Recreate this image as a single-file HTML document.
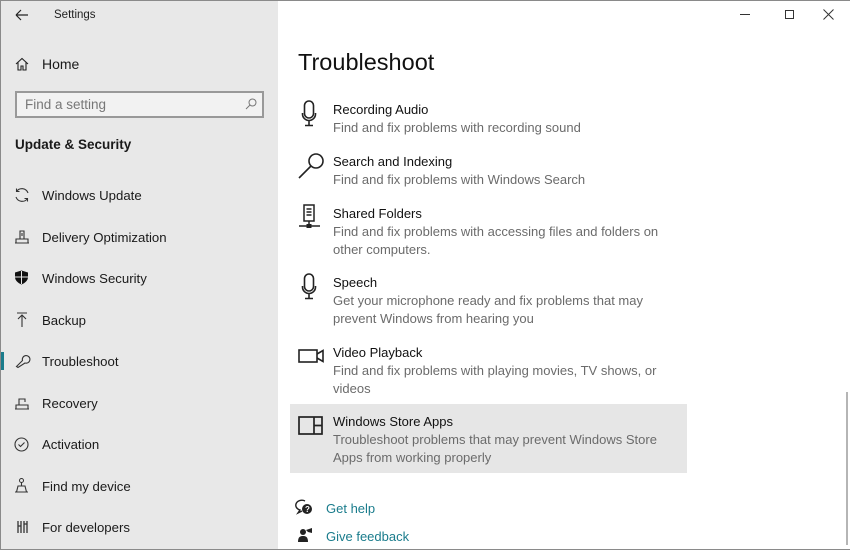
<!DOCTYPE html>
<html><head><style>
*{margin:0;padding:0;box-sizing:border-box}
body{width:850px;height:550px;overflow:hidden;font-family:"Liberation Sans",sans-serif;background:#fff;position:relative}
.win{position:absolute;left:0;top:0;width:850px;height:550px;border:1px solid #8a8a8a;border-right:none}
.side{position:absolute;left:1px;top:1px;width:277px;height:548px;background:#e8e8e8}
.a{position:absolute;white-space:nowrap}
.nav{font-size:13.2px;color:#1a1a1a}
.t{font-size:13px;color:#111}
.d{font-size:13px;color:#6b6b6b;line-height:17.5px}
svg{position:absolute;overflow:visible}
.lk{font-size:13px;color:#1a7c8c}
</style></head><body>
<div class="win"></div>
<div class="side"></div>
<svg style="left:15px;top:8px" width="14" height="14"><path d="M1 7H13M1 7L6 2M1 7L6 12" stroke="#222" fill="none" stroke-width="1.2"/></svg>
<div class="a" style="left:54px;top:9px;font-size:11.5px;color:#222">Settings</div>
<svg style="left:15px;top:57px" width="14" height="14"><path d="M1 7L7 1.5L13 7M3 5.5V13H6V9H8V13H11V5.5" stroke="#222" fill="none" stroke-width="1.1"/></svg>
<div class="a nav" style="left:42px;top:56px;font-size:14px">Home</div>
<div class="a" style="left:15px;top:91px;width:249px;height:27px;border:2px solid #999;background:#f2f2f2"></div>
<div class="a" style="left:25px;top:97px;font-size:13.5px;color:#777">Find a setting</div>
<svg style="left:245px;top:98px" width="12" height="12"><circle cx="7.5" cy="4.5" r="3.5" stroke="#777" fill="none"/><path d="M5 7L1 11" stroke="#777"/></svg>
<div class="a" style="left:15px;top:137px;font-size:13.5px;font-weight:bold;color:#1a1a1a">Update &amp; Security</div>

<svg style="left:14px;top:187px" width="16" height="16"><path d="M14 6A6.5 6.5 0 0 0 2.5 4.5M2 10A6.5 6.5 0 0 0 13.5 11.5M2.5 1.5V4.5H5.5M13.5 14.5V11.5H10.5" stroke="#333" fill="none" stroke-width="1.1"/></svg>
<div class="a nav" style="left:42px;top:188px">Windows Update</div>
<svg style="left:14px;top:229px" width="16" height="15"><path d="M1 14H15M2 14V10H14V14M6 10V2H10V10M8 4V7" stroke="#333" fill="none" stroke-width="1.1"/></svg>
<div class="a nav" style="left:42px;top:230px">Delivery Optimization</div>
<svg style="left:14px;top:270px" width="15" height="15"><path d="M7.5 0.5L14 2.5V7C14 10.5 11 13 7.5 14.5C4 13 1 10.5 1 7V2.5Z" fill="#111"/><path d="M7.5 1V14M1 7H14" stroke="#e8e8e8" stroke-width="1"/></svg>
<div class="a nav" style="left:42px;top:271px">Windows Security</div>
<svg style="left:15px;top:312px" width="14" height="15"><path d="M2 1H12M7 3V15M3 7L7 3L11 7" stroke="#333" fill="none" stroke-width="1.1"/></svg>
<div class="a nav" style="left:42px;top:313px">Backup</div>
<div class="a" style="left:1px;top:352px;width:3px;height:18px;background:#1a7c8c"></div>
<svg style="left:15px;top:353px" width="15" height="15"><path d="M1.5 13.5L7.5 7.5A3.8 3.8 0 1 1 10 10L3 14.5Z" stroke="#333" fill="none" stroke-width="1.1"/></svg>
<div class="a nav" style="left:42px;top:354px">Troubleshoot</div>
<svg style="left:14px;top:395px" width="16" height="15"><path d="M1 14H15M2 14V10H14V14M5 10V4H11V7" stroke="#333" fill="none" stroke-width="1.1"/></svg>
<div class="a nav" style="left:42px;top:396px">Recovery</div>
<svg style="left:14px;top:437px" width="15" height="15"><circle cx="7.5" cy="7.5" r="6.5" stroke="#333" fill="none" stroke-width="1.1"/><path d="M4.5 7.5L6.5 9.5L10.5 5.5" stroke="#333" fill="none" stroke-width="1.1"/></svg>
<div class="a nav" style="left:42px;top:437px">Activation</div>
<svg style="left:14px;top:478px" width="15" height="15"><circle cx="7.5" cy="2.5" r="2" stroke="#333" fill="none"/><path d="M7.5 4.5V8M1 14H14M2.5 14L4 8H11L12.5 14" stroke="#333" fill="none" stroke-width="1.1"/></svg>
<div class="a nav" style="left:42px;top:479px">Find my device</div>
<svg style="left:15px;top:520px" width="14" height="14"><path d="M3 1V13M6 1V13M3 6H6M9 1V13M12 1V13M9 4H12" stroke="#333" fill="none" stroke-width="1.3"/></svg>
<div class="a nav" style="left:42px;top:520px">For developers</div>

<div class="a" style="left:740px;top:14px;width:10px;height:1px;background:#333"></div>
<div class="a" style="left:785px;top:10px;width:9px;height:9px;border:1px solid #333"></div>
<svg style="left:823px;top:9px" width="11" height="11"><path d="M0.5 0.5L10.5 10.5M10.5 0.5L0.5 10.5" stroke="#333"/></svg>

<div class="a" style="left:298px;top:49px;font-size:23.5px;color:#111">Troubleshoot</div>

<svg style="left:302px;top:100px" width="16" height="30"><rect x="2.5" y="1" width="9" height="17" rx="4.5" stroke="#222" fill="none" stroke-width="1.6"/><path d="M0.5 13V14A6.5 6.5 0 0 0 13.5 14V13M7 21V25M3 25.5H11" stroke="#222" fill="none" stroke-width="1.6"/></svg>
<div class="a t" style="left:333px;top:102px">Recording Audio</div>
<div class="a d" style="left:333px;top:119px">Find and fix problems with recording sound</div>

<svg style="left:298px;top:152px" width="28" height="28"><circle cx="18" cy="9" r="7" stroke="#222" fill="none" stroke-width="1.6"/><path d="M13 14L1 26" stroke="#222" stroke-width="1.6"/></svg>
<div class="a t" style="left:333px;top:154px">Search and Indexing</div>
<div class="a d" style="left:333px;top:171px">Find and fix problems with Windows Search</div>

<svg style="left:299px;top:204px" width="22" height="26"><rect x="5" y="1" width="10" height="16" stroke="#222" fill="none" stroke-width="1.5"/><path d="M7.5 5H12.5M7.5 8H12.5M7.5 11H12.5M10 17V22M0 22H21" stroke="#222" stroke-width="1.5"/><rect x="7.5" y="20" width="5" height="4" fill="#222"/></svg>
<div class="a t" style="left:333px;top:206px">Shared Folders</div>
<div class="a d" style="left:333px;top:223px">Find and fix problems with accessing files and folders on<br>other computers.</div>

<svg style="left:302px;top:273px" width="16" height="30"><rect x="2.5" y="1" width="9" height="17" rx="4.5" stroke="#222" fill="none" stroke-width="1.6"/><path d="M0.5 13V14A6.5 6.5 0 0 0 13.5 14V13M7 21V25M3 25.5H11" stroke="#222" fill="none" stroke-width="1.6"/></svg>
<div class="a t" style="left:333px;top:275px">Speech</div>
<div class="a d" style="left:333px;top:292px">Get your microphone ready and fix problems that may<br>prevent Windows from hearing you</div>

<svg style="left:298px;top:348px" width="28" height="16"><rect x="1" y="2" width="18" height="12" stroke="#222" fill="none" stroke-width="1.6"/><path d="M19 6L25 2.5V13.5L19 10" stroke="#222" fill="none" stroke-width="1.6"/></svg>
<div class="a t" style="left:333px;top:345px">Video Playback</div>
<div class="a d" style="left:333px;top:362px">Find and fix problems with playing movies, TV shows, or<br>videos</div>

<div class="a" style="left:290px;top:404px;width:397px;height:69px;background:#e6e6e6"></div>
<svg style="left:298px;top:416px" width="28" height="20"><rect x="1" y="1" width="23" height="17" stroke="#222" fill="none" stroke-width="1.7"/><path d="M16 1V18M16 9.5H24" stroke="#222" stroke-width="1.7"/></svg>
<div class="a t" style="left:333px;top:414px">Windows Store Apps</div>
<div class="a d" style="left:333px;top:431px">Troubleshoot problems that may prevent Windows Store<br>Apps from working properly</div>

<svg style="left:297px;top:500px" width="16" height="16"><path d="M8 1A6 5 0 1 0 3 10L1 13L5 11" stroke="#222" fill="none" stroke-width="1.4"/><circle cx="10" cy="9" r="5" fill="#222"/><text x="8" y="12" font-size="8" fill="#fff" font-family="Liberation Sans" font-weight="bold">?</text></svg>
<div class="a lk" style="left:326px;top:501px">Get help</div>
<svg style="left:298px;top:527px" width="16" height="16"><circle cx="5" cy="5" r="3" fill="#222"/><path d="M0 15C0 10 2 9 5 9C8 9 10 10 10 15Z" fill="#222"/><path d="M8 3L14 1V6L10 5Z" fill="#222"/></svg>
<div class="a lk" style="left:326px;top:529px">Give feedback</div>

<div class="a" style="left:846px;top:392px;width:2px;height:153px;background:#b5b5b5"></div>
</body></html>
